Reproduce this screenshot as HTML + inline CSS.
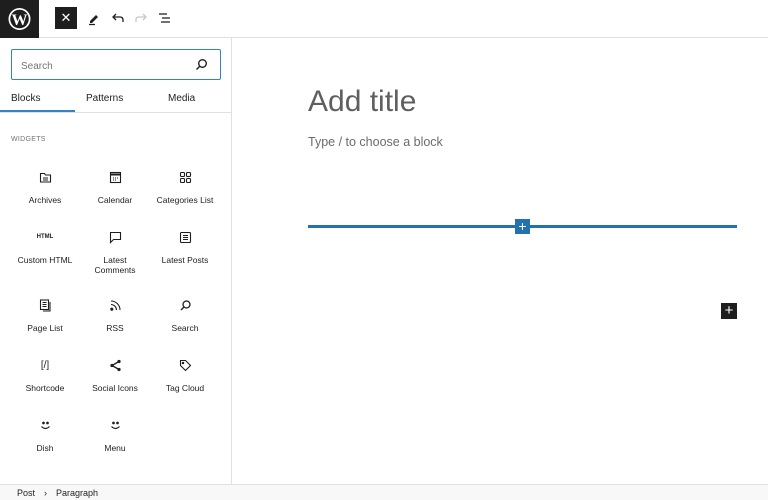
<!DOCTYPE html>
<html><head><meta charset="utf-8"><style>
*{box-sizing:border-box;margin:0;padding:0}
body{width:768px;height:500px;overflow:hidden;background:#fff;font-family:"Liberation Sans",sans-serif;color:#1e1e1e;position:relative}
.top{position:absolute;left:0;top:0;width:768px;height:38px;border-bottom:1px solid #e0e0e0;background:#fff}
.logo{position:absolute;left:0;top:0;width:39px;height:38px;background:#1e1e1e}
.close{position:absolute;left:55px;top:7px;width:22px;height:22px;background:#1e1e1e;color:#fff;font-size:13px;text-align:center;line-height:22px}
.side{position:absolute;left:0;top:38px;width:232px;height:446px;border-right:1px solid #e0e0e0}
.search{position:absolute;left:11px;top:11px;width:210px;height:31px;border:1.5px solid #3582c4;border-radius:2px;font-size:10px;color:#757575;padding:11px 9px}
.tabs{position:absolute;left:0;top:48px;width:231px;height:27px;border-bottom:1px solid #e0e0e0;font-size:10px}
.tabs span{position:absolute;top:7px}
.ul{position:absolute;left:0;top:72px;width:75px;height:2px;background:#3582c4}
.wl{position:absolute;left:11px;top:98px;font-size:7px;color:#757575;letter-spacing:.3px}
.it{position:absolute;width:70px;text-align:center;font-size:8.5px;color:#1e1e1e;line-height:10px}
.it svg{display:block;margin:0 auto 11px}
.bottom{position:absolute;left:0;top:484px;width:768px;height:16px;background:#f8f8f8;border-top:1px solid #e0e0e0;font-size:9px;color:#1e1e1e}
.title{position:absolute;left:308px;top:85px;font-size:30px;color:#5f5f5f}
.type{position:absolute;left:308px;top:135px;font-size:12.5px;color:#6b6b6b}
.line{position:absolute;left:308px;top:225px;width:429px;height:3px;background:#2271b1}
.pl{position:absolute;left:515px;top:219px;width:15px;height:15px;background:#2271b1;color:#fff;font-size:14px;line-height:14px;text-align:center}
.pb{position:absolute;left:721px;top:303px;width:16px;height:16px;background:#1e1e1e;color:#fff;font-size:15px;line-height:15px;text-align:center}
</style></head><body>
<div class="top">
<div class="logo"><svg width="39" height="38" viewBox="0 0 39 38"><circle cx="19.5" cy="19" r="11" fill="#fff"/><circle cx="19.5" cy="19" r="9.3" fill="#1e1e1e"/><text x="19.5" y="25" font-family="Liberation Serif" font-size="16" font-weight="bold" fill="#fff" text-anchor="middle">W</text></svg></div>
<div class="close">✕</div>
<svg style="position:absolute;left:86px;top:10px" width="16" height="16" viewBox="0 0 16 16"><path d="M4 11 L10 5 L12 7 L6 13 H4Z" fill="#1e1e1e"/><path d="M3 14.5h6" stroke="#1e1e1e" stroke-width="1.3"/></svg>
<svg style="position:absolute;left:110px;top:10px" width="16" height="16" viewBox="0 0 16 16" fill="none" stroke="#1e1e1e" stroke-width="1.3"><path d="M6 4 L3 7 L6 10"/><path d="M3 7 H10 Q13 7 13 10 V12"/></svg>
<svg style="position:absolute;left:133px;top:10px" width="16" height="16" viewBox="0 0 16 16" fill="none" stroke="#c8c8c8" stroke-width="1.3"><path d="M10 4 L13 7 L10 10"/><path d="M13 7 H6 Q3 7 3 10 V12"/></svg>
<svg style="position:absolute;left:157px;top:10px" width="16" height="16" viewBox="0 0 16 16" stroke="#1e1e1e" stroke-width="1.3"><path d="M2 4h8M5 8h8M4 12h9"/></svg>
</div>
<div class="side">
<div class="search">Search<svg style="position:absolute;right:12px;top:8px" width="13" height="13" viewBox="0 0 13 13" fill="none" stroke="#1e1e1e" stroke-width="1.4"><circle cx="7.5" cy="5.5" r="3.8"/><path d="M4.8 8.2 L1.5 11.5"/></svg></div>
<div class="tabs"><span style="left:11px">Blocks</span><span style="left:86px">Patterns</span><span style="left:168px">Media</span></div>
<div class="ul"></div>
<div class="wl">WIDGETS</div>
</div>
<div class="it" style="left:10px;top:171px"><svg width="13" height="13" viewBox="0 0 13 13" fill="none" stroke="#1e1e1e" stroke-width="1.1"><path d="M1.5 2.5h4l1 1.5h5v7h-10z M4 7h5M4 9h5"/></svg>Archives</div>
<div class="it" style="left:80px;top:171px"><svg width="13" height="13" viewBox="0 0 13 13" fill="none" stroke="#1e1e1e" stroke-width="1.1"><rect x="1.5" y="1.5" width="10" height="10"/><path d="M1.5 3.5h10" stroke-width="2"/><path d="M4 7h1M6 7h1M8 7h1M4 9h1M6 9h1" /></svg>Calendar</div>
<div class="it" style="left:150px;top:171px"><svg width="13" height="13" viewBox="0 0 13 13" fill="none" stroke="#1e1e1e" stroke-width="1.1"><rect x="1.5" y="1.5" width="4" height="4" rx="1"/><rect x="7.5" y="1.5" width="4" height="4" rx="1"/><rect x="1.5" y="7.5" width="4" height="4" rx="1"/><rect x="7.5" y="7.5" width="4" height="4" rx="1"/></svg>Categories List</div>
<div class="it" style="left:10px;top:231px"><div style="font-size:6px;font-weight:bold;height:13px;margin-bottom:11px;line-height:13px">HTML</div>Custom HTML</div>
<div class="it" style="left:80px;top:231px"><svg width="13" height="13" viewBox="0 0 13 13" fill="none" stroke="#1e1e1e" stroke-width="1.1"><path d="M1.5 1.5h10v7h-7l-3 3z"/></svg>Latest<br>Comments</div>
<div class="it" style="left:150px;top:231px"><svg width="13" height="13" viewBox="0 0 13 13" fill="none" stroke="#1e1e1e" stroke-width="1.1"><rect x="1.5" y="1.5" width="10" height="10" rx="1"/><path d="M4 4.5h5M4 6.5h5M4 8.5h5"/></svg>Latest Posts</div>
<div class="it" style="left:10px;top:299px"><svg width="13" height="13" viewBox="0 0 13 13" fill="none" stroke="#1e1e1e" stroke-width="1.1"><rect x="1.5" y="1" width="8" height="9.5"/><path d="M11 3v9H4M3.5 3.5h4M3.5 5.5h4M3.5 7.5h4"/></svg>Page List</div>
<div class="it" style="left:80px;top:299px"><svg width="13" height="13" viewBox="0 0 13 13" fill="none" stroke="#1e1e1e" stroke-width="1.1"><path d="M2 2a9 9 0 0 1 9 9M2 5.5a5.5 5.5 0 0 1 5.5 5.5"/><circle cx="2.8" cy="10.2" r="1" fill="#1e1e1e"/></svg>RSS</div>
<div class="it" style="left:150px;top:299px"><svg width="13" height="13" viewBox="0 0 13 13" fill="none" stroke="#1e1e1e" stroke-width="1.3"><circle cx="7.5" cy="5.5" r="3.5"/><path d="M5 8L2 11"/></svg>Search</div>
<div class="it" style="left:10px;top:359px"><div style="font-size:10px;height:13px;margin-bottom:11px;line-height:13px">[/]</div>Shortcode</div>
<div class="it" style="left:80px;top:359px"><svg width="13" height="13" viewBox="0 0 13 13" fill="none" stroke="#1e1e1e" stroke-width="1.3"><path d="M10 2.5L3 6.5L10 10.5"/><circle cx="10" cy="2.5" r="1" fill="#1e1e1e"/><circle cx="3" cy="6.5" r="1" fill="#1e1e1e"/><circle cx="10" cy="10.5" r="1" fill="#1e1e1e"/></svg>Social Icons</div>
<div class="it" style="left:150px;top:359px"><svg width="13" height="13" viewBox="0 0 13 13" fill="none" stroke="#1e1e1e" stroke-width="1.1"><path d="M1.5 1.5h5l5 5-5 5-5-5z"/><circle cx="4" cy="4" r=".7" fill="#1e1e1e"/></svg>Tag Cloud</div>
<div class="it" style="left:10px;top:419px"><svg width="13" height="13" viewBox="0 0 13 13" fill="none" stroke="#1e1e1e" stroke-width="1.1"><circle cx="4.5" cy="4" r=".8" fill="#1e1e1e"/><circle cx="8.5" cy="4" r=".8" fill="#1e1e1e"/><path d="M2.5 7.5Q6.5 11.5 10.5 7.5"/></svg>Dish</div>
<div class="it" style="left:80px;top:419px"><svg width="13" height="13" viewBox="0 0 13 13" fill="none" stroke="#1e1e1e" stroke-width="1.1"><circle cx="4.5" cy="4" r=".8" fill="#1e1e1e"/><circle cx="8.5" cy="4" r=".8" fill="#1e1e1e"/><path d="M2.5 7.5Q6.5 11.5 10.5 7.5"/></svg>Menu</div>
<div class="title">Add title</div>
<div class="type">Type / to choose a block</div>
<div class="line"></div>
<div class="pl">+</div>
<div class="pb">+</div>
<div class="bottom"><span style="position:absolute;left:17px;top:3px">Post</span><span style="position:absolute;left:44px;top:3px">›</span><span style="position:absolute;left:56px;top:3px">Paragraph</span></div>
</body></html>
